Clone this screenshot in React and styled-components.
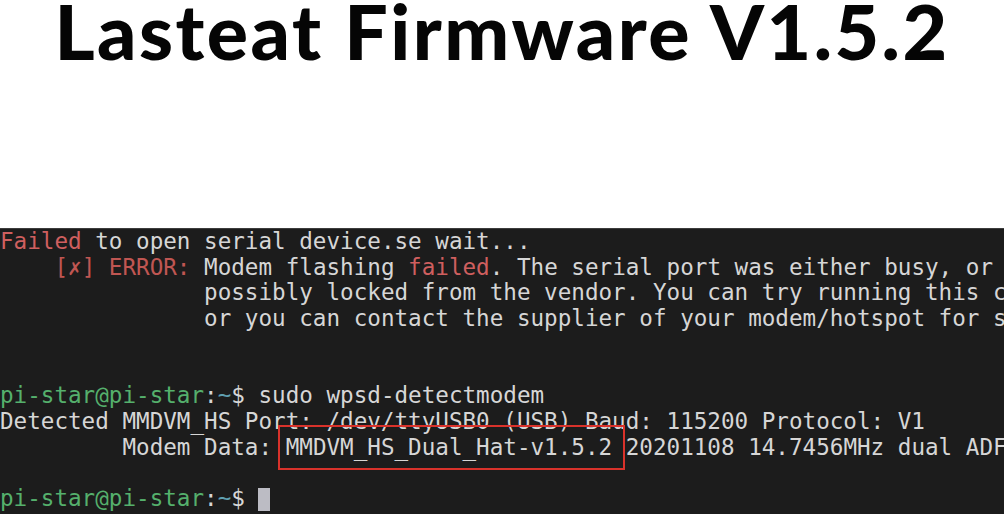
import React from 'react';
import styled, { createGlobalStyle } from 'styled-components';

const Global = createGlobalStyle`
    html, body {
        margin: 0;
        padding: 0;
        background: #ffffff;
    }
    body {
        width: 1004px;
        height: 522px;
        overflow: hidden;
    }
`;

const Page = styled.div`
    display: flex;
    flex-direction: column;
    align-items: stretch;
    width: 1004px;
`;

const Title = styled.h1`
    margin: 0;
    font-family: Lato, "Noto Sans", sans-serif;
    font-weight: 900;
    font-size: 77px;
    line-height: 60px;
    color: #050505;
    text-align: center;
    letter-spacing: 2.5px;
`;

const Terminal = styled.div`
    margin-top: 168px;
    height: 286px;
    background: #1c1c1c;
    border-top: 1px solid #3c3c3c;
    box-sizing: border-box;
    overflow: hidden;
    font-family: "DejaVu Sans Mono", "Liberation Mono", monospace;
    font-size: 22.6px;
    line-height: 25.7px;
    color: #d6d6d6;
`;

const Line = styled.div`
    white-space: pre;
    height: 25.7px;
`;

const Red = styled.span`
    color: ${props => props.dim ? '#c05652' : '#cf5f5f'};
`;

const User = styled.span`
    color: #55b06c;
`;

const Tilde = styled.span`
    color: #5f9fb0;
`;

const Marked = styled.span`
    position: relative;
    &::after {
        content: '';
        position: absolute;
        left: -8px;
        right: -13px;
        top: -9px;
        bottom: -10px;
        border: 2px solid #d9322b;
    }
`;

const Cursor = styled.span`
    display: inline-block;
    width: 12px;
    height: 23px;
    vertical-align: -5px;
    background: #bcbcc4;
`;

const Prompt = () => (
    <>
        <User>pi-star@pi-star</User>:<Tilde>~</Tilde>$
    </>
);

const App = () => {
    return (
        <Page>
            <Global />
            <Title>Lasteat Firmware V1.5.2</Title>
            <Terminal>
                <Line><Red>Failed</Red> to open serial device.se wait...</Line>
                <Line>{'    '}<Red dim>[✗] ERROR:</Red> Modem flashing <Red>failed</Red>. The serial port was either busy, or</Line>
                <Line>{'               '}possibly locked from the vendor. You can try running this c</Line>
                <Line>{'               '}or you can contact the supplier of your modem/hotspot for s</Line>
                <Line />
                <Line />
                <Line><Prompt /> sudo wpsd-detectmodem</Line>
                <Line>Detected MMDVM_HS Port: /dev/ttyUSB0 (USB) Baud: 115200 Protocol: V1</Line>
                <Line>{'         '}Modem Data: <Marked>MMDVM_HS_Dual_Hat-v1.5.2</Marked> 20201108 14.7456MHz dual ADF</Line>
                <Line />
                <Line><Prompt /> <Cursor /></Line>
            </Terminal>
        </Page>
    );
};

export default App;
